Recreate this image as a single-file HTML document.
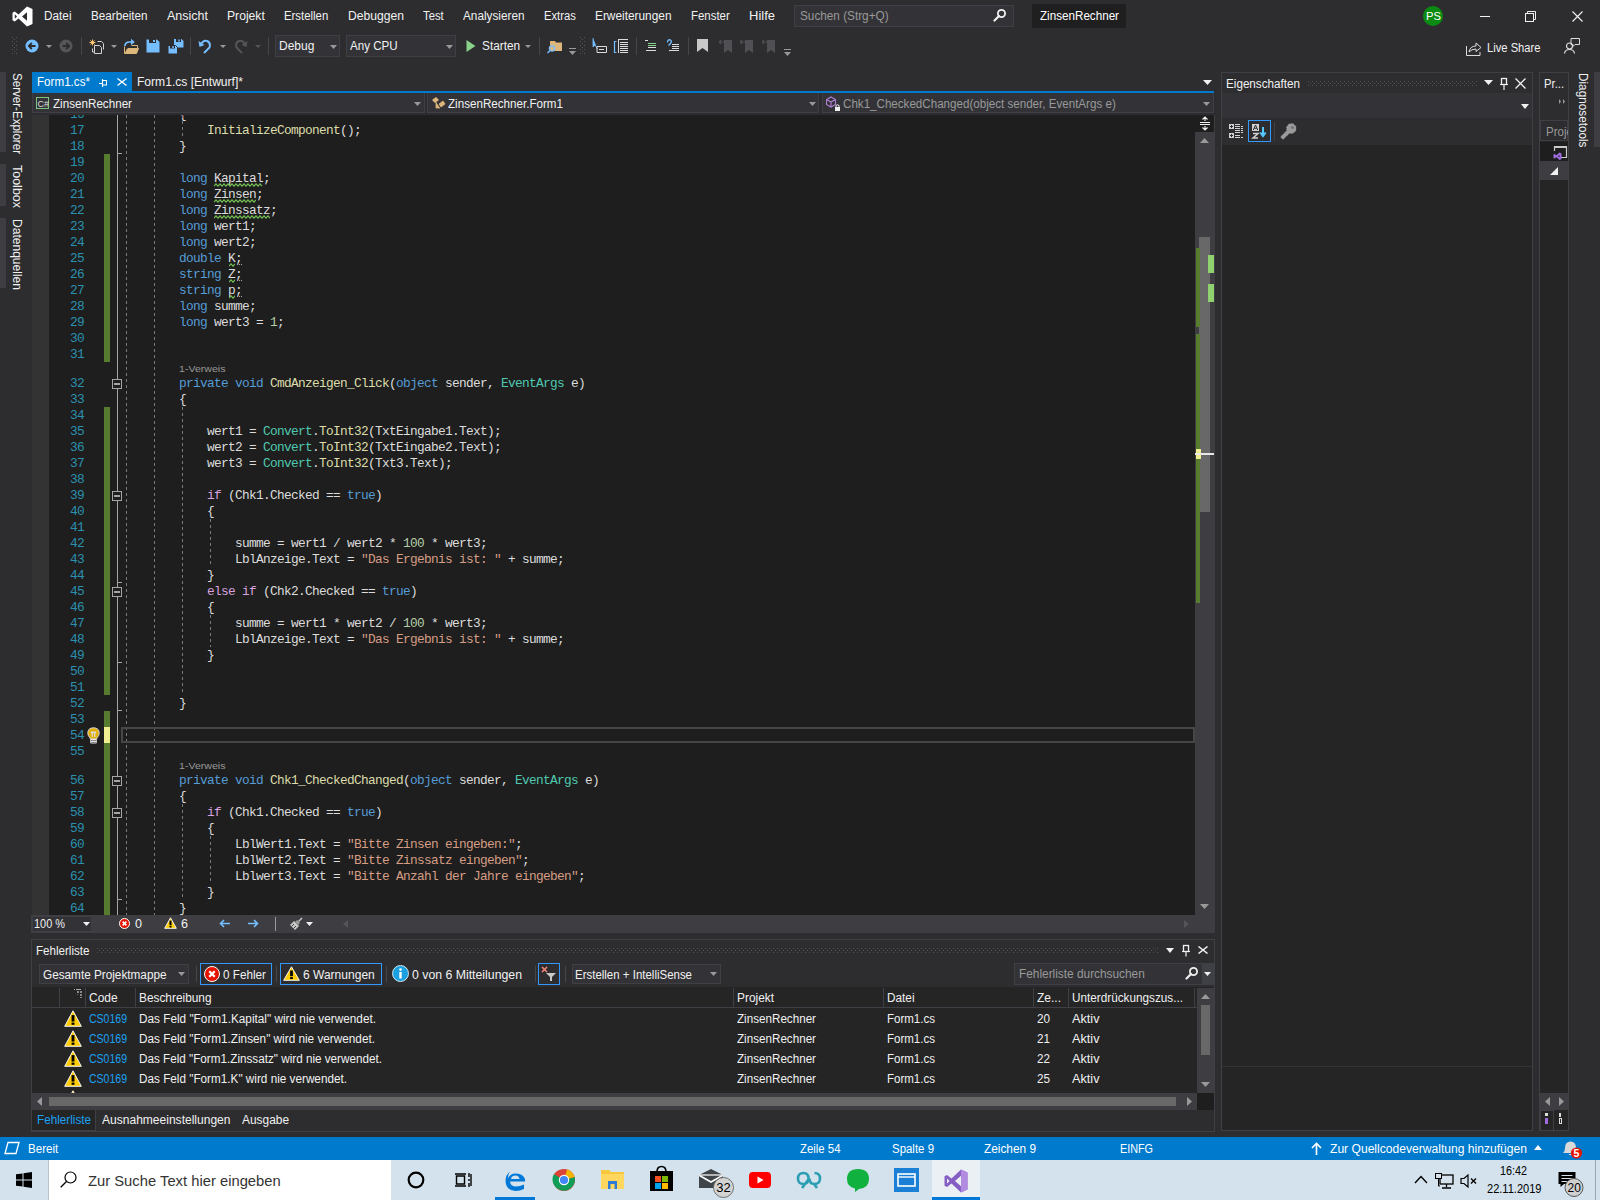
<!DOCTYPE html>
<html><head><meta charset="utf-8"><style>

html,body{margin:0;padding:0;}
body{width:1600px;height:1200px;overflow:hidden;background:#2D2D30;position:relative;font-family:"Liberation Sans",sans-serif;}
.a{position:absolute;box-sizing:border-box;}
.t{position:absolute;white-space:pre;line-height:1;transform-origin:0 0;}
.code{position:absolute;left:123px;white-space:pre;font-family:"Liberation Mono",monospace;font-size:12.8px;letter-spacing:-0.68px;line-height:16px;color:#DCDCDC;}
.ln{position:absolute;left:40px;width:44px;text-align:right;font-family:"Liberation Mono",monospace;font-size:12.8px;letter-spacing:-0.68px;line-height:16px;color:#2B91AF;}
.k{color:#569CD6}.c{color:#D8A0DF}.ty{color:#4EC9B0}.m{color:#DCDCAA}.s{color:#D69D85}.n{color:#B5CEA8}

</style></head><body>
<svg class="a" style="left:12px;top:6px;" width="21" height="21" viewBox="0 0 21 21"><path d="M15 0.5 L20.5 3 V18 L15 20.5 L6.5 12.5 L2.8 15.5 L0.5 14.3 V6.7 L2.8 5.5 L6.5 8.5 Z M15 6.2 L10 10.5 L15 14.8 Z M2.8 8.3 V12.7 L5 10.5 Z" fill="#FFFFFF" fill-rule="evenodd"/></svg>
<div class="t" style="left:43.50px;top:9.84px;font-size:12px;color:#F1F1F1;transform:scaleX(0.9817);">Datei</div>
<div class="t" style="left:90.50px;top:9.84px;font-size:12px;color:#F1F1F1;transform:scaleX(0.9734);">Bearbeiten</div>
<div class="t" style="left:166.50px;top:9.84px;font-size:12px;color:#F1F1F1;transform:scaleX(1.0419);">Ansicht</div>
<div class="t" style="left:226.50px;top:9.84px;font-size:12px;color:#F1F1F1;transform:scaleX(1.0108);">Projekt</div>
<div class="t" style="left:283.50px;top:9.84px;font-size:12px;color:#F1F1F1;transform:scaleX(0.9478);">Erstellen</div>
<div class="t" style="left:347.50px;top:9.84px;font-size:12px;color:#F1F1F1;transform:scaleX(1.0111);">Debuggen</div>
<div class="t" style="left:422.50px;top:9.84px;font-size:12px;color:#F1F1F1;transform:scaleX(0.9428);">Test</div>
<div class="t" style="left:462.50px;top:9.84px;font-size:12px;color:#F1F1F1;transform:scaleX(0.9808);">Analysieren</div>
<div class="t" style="left:543.50px;top:9.84px;font-size:12px;color:#F1F1F1;transform:scaleX(0.9336);">Extras</div>
<div class="t" style="left:594.50px;top:9.84px;font-size:12px;color:#F1F1F1;transform:scaleX(0.9886);">Erweiterungen</div>
<div class="t" style="left:690.50px;top:9.84px;font-size:12px;color:#F1F1F1;transform:scaleX(0.9525);">Fenster</div>
<div class="t" style="left:748.50px;top:9.84px;font-size:12px;color:#F1F1F1;transform:scaleX(1.0831);">Hilfe</div>
<div class="a" style="left:794px;top:5px;width:220px;height:22px;background:#333337;border:1px solid #3F3F46;"></div>
<div class="t" style="left:799.50px;top:9.84px;font-size:12px;color:#999999;transform:scaleX(0.9804);">Suchen (Strg+Q)</div>
<svg class="a" style="left:993px;top:8px;" width="14" height="14" viewBox="0 0 14 14"><circle cx="8.5" cy="5.5" r="3.6" fill="none" stroke="#F1F1F1" stroke-width="1.8"/><path d="M6 8 L1.5 12.5" stroke="#F1F1F1" stroke-width="2.2" stroke-linecap="round"/></svg>
<div class="a" style="left:1032px;top:4px;width:94px;height:24px;background:#1F1F20;"></div>
<div class="t" style="left:1039.50px;top:9.84px;font-size:12px;color:#FFFFFF;transform:scaleX(0.9708);">ZinsenRechner</div>
<svg class="a" style="left:1423px;top:6px;" width="20" height="20" viewBox="0 0 20 20"><circle cx="10" cy="10" r="10" fill="#0B8A12"/></svg>
<div class="t" style="left:1425.50px;top:11.19px;font-size:11px;color:#FFFFFF;transform:scaleX(1.0222);">PS</div>
<div class="a" style="left:1480px;top:16px;width:10px;height:1px;background:#F1F1F1;"></div>
<svg class="a" style="left:1525px;top:11px;" width="12" height="12" viewBox="0 0 12 12"><rect x="0.5" y="2.5" width="8" height="8" fill="none" stroke="#F1F1F1"/><path d="M2.5 2.5 V0.5 H10.5 V8.5 H8.5" fill="none" stroke="#F1F1F1"/></svg>
<svg class="a" style="left:1572px;top:11px;" width="11" height="11" viewBox="0 0 11 11"><path d="M0.5 0.5 L10.5 10.5 M10.5 0.5 L0.5 10.5" stroke="#F1F1F1" stroke-width="1.1"/></svg>
<svg class="a" style="left:12px;top:37px;" width="5" height="18" viewBox="0 0 5 18"><rect x="0" y="0" width="1" height="1" fill="#55555A"/><rect x="4" y="0" width="1" height="1" fill="#55555A"/><rect x="0" y="4" width="1" height="1" fill="#55555A"/><rect x="4" y="4" width="1" height="1" fill="#55555A"/><rect x="0" y="8" width="1" height="1" fill="#55555A"/><rect x="4" y="8" width="1" height="1" fill="#55555A"/><rect x="0" y="12" width="1" height="1" fill="#55555A"/><rect x="4" y="12" width="1" height="1" fill="#55555A"/><rect x="0" y="16" width="1" height="1" fill="#55555A"/><rect x="4" y="16" width="1" height="1" fill="#55555A"/><rect x="2" y="2" width="1" height="1" fill="#55555A"/><rect x="2" y="6" width="1" height="1" fill="#55555A"/><rect x="2" y="10" width="1" height="1" fill="#55555A"/><rect x="2" y="14" width="1" height="1" fill="#55555A"/></svg>
<svg class="a" style="left:25px;top:39px;" width="14" height="14" viewBox="0 0 14 14"><circle cx="7" cy="7" r="6.5" fill="#75BEFF"/><path d="M10.5 7 H4 M6.8 4 L3.8 7 L6.8 10" stroke="#2D2D30" stroke-width="1.8" fill="none"/></svg>
<svg class="a" style="left:46px;top:45px;" width="6" height="3" viewBox="0 0 6 3"><path d="M0 0 H6 L3.0 3 Z" fill="#999999"/></svg>
<svg class="a" style="left:59px;top:39px;" width="14" height="14" viewBox="0 0 14 14"><circle cx="7" cy="7" r="6.5" fill="#555558"/><path d="M3.5 7 H10 M7.2 4 L10.2 7 L7.2 10" stroke="#2D2D30" stroke-width="1.8" fill="none"/></svg>
<div class="a" style="left:81px;top:37px;width:1px;height:18px;background:#46464A;"></div>
<svg class="a" style="left:89px;top:38px;" width="16" height="17" viewBox="0 0 16 17"><path d="M3.5 1.5 V7.5 M0.5 4.5 H6.5 M1.4 2.4 L5.6 6.6 M5.6 2.4 L1.4 6.6" stroke="#F6C26B" stroke-width="1"/><circle cx="3.5" cy="4.5" r="1.6" fill="#F6C26B"/><path d="M8.5 3.5 H12.5 L14.5 5.5 V11.5" fill="none" stroke="#D0D0D0" stroke-width="1"/><path d="M5.5 7.5 H10.5 L12.5 9.5 V15.5 H5.5 Z" fill="#2D2D30" stroke="#D0D0D0" stroke-width="1"/><path d="M3.5 10.5 V14 H5" fill="none" stroke="#D0D0D0" stroke-width="1"/></svg>
<svg class="a" style="left:111px;top:45px;" width="6" height="3" viewBox="0 0 6 3"><path d="M0 0 H6 L3.0 3 Z" fill="#999999"/></svg>
<svg class="a" style="left:123px;top:38px;" width="16" height="17" viewBox="0 0 16 17"><path d="M1.5 8.5 V15.5 H13.5 L15.5 10.5 H5" fill="none" stroke="#DCB67A" stroke-width="1"/><path d="M1.5 15.5 L4 10.5 H15.5 L13.5 15.5 Z" fill="#DCB67A"/><path d="M8.5 7.5 H14.5 V10" fill="none" stroke="#DCB67A" stroke-width="1"/><path d="M2 8 Q2 4 6.5 4 H8.5" fill="none" stroke="#75BEFF" stroke-width="1.7"/><path d="M8 0.8 L11.8 4 L8 7.2 Z" fill="#75BEFF"/></svg>
<svg class="a" style="left:146px;top:39px;" width="14" height="14" viewBox="0 0 14 14"><path d="M0.5 0.5 H11 L13.5 3 V13.5 H0.5 Z" fill="#75BEFF"/><rect x="3" y="0" width="7" height="4" fill="#2D2D30"/><rect x="7" y="1" width="2" height="2" fill="#75BEFF"/></svg>
<svg class="a" style="left:167px;top:38px;" width="17" height="17" viewBox="0 0 17 17"><path d="M7 1 H14.5 L16.5 3 V9.5 H7 Z" fill="#75BEFF"/><rect x="9" y="1" width="5" height="3" fill="#2D2D30"/><rect x="11.3" y="1.5" width="1.5" height="2" fill="#75BEFF"/><path d="M1 7.5 H8.5 L10.5 9.5 V16 H1 Z" fill="#75BEFF" stroke="#2D2D30" stroke-width="1"/><rect x="3" y="7.5" width="5" height="3" fill="#2D2D30"/><rect x="5.3" y="8" width="1.5" height="2" fill="#75BEFF"/></svg>
<div class="a" style="left:190px;top:37px;width:1px;height:18px;background:#46464A;"></div>
<svg class="a" style="left:198px;top:39px;" width="14" height="15" viewBox="0 0 14 15"><path d="M2.5 6 Q5 1 9 2 Q13 3.5 11.5 8.5 L6 14" fill="none" stroke="#75BEFF" stroke-width="2"/><path d="M0.5 2 L1.5 8 L6.5 6 Z" fill="#75BEFF"/></svg>
<svg class="a" style="left:220px;top:45px;" width="6" height="3" viewBox="0 0 6 3"><path d="M0 0 H6 L3.0 3 Z" fill="#999999"/></svg>
<svg class="a" style="left:234px;top:39px;" width="14" height="15" viewBox="0 0 14 15"><path d="M11.5 6 Q9 1 5 2 Q1 3.5 2.5 8.5 L8 14" fill="none" stroke="#555558" stroke-width="2"/><path d="M13.5 2 L12.5 8 L7.5 6 Z" fill="#555558"/></svg>
<svg class="a" style="left:255px;top:45px;" width="6" height="3" viewBox="0 0 6 3"><path d="M0 0 H6 L3.0 3 Z" fill="#555558"/></svg>
<div class="a" style="left:268px;top:37px;width:1px;height:18px;background:#46464A;"></div>
<div class="a" style="left:275px;top:35px;width:65px;height:22px;background:#333337;border:1px solid #3F3F46;"></div>
<div class="t" style="left:278.90px;top:40.34px;font-size:12px;color:#F1F1F1;transform:scaleX(0.9983);">Debug</div>
<svg class="a" style="left:330px;top:45px;" width="7" height="4" viewBox="0 0 7 4"><path d="M0 0 H7 L3.5 4 Z" fill="#999999"/></svg>
<div class="a" style="left:346px;top:35px;width:110px;height:22px;background:#333337;border:1px solid #3F3F46;"></div>
<div class="t" style="left:349.50px;top:40.34px;font-size:12px;color:#F1F1F1;transform:scaleX(0.9666);">Any CPU</div>
<svg class="a" style="left:446px;top:45px;" width="7" height="4" viewBox="0 0 7 4"><path d="M0 0 H7 L3.5 4 Z" fill="#999999"/></svg>
<svg class="a" style="left:466px;top:40px;" width="10" height="12" viewBox="0 0 10 12"><path d="M0.5 0 L9.5 6 L0.5 12 Z" fill="#8AD28A"/></svg>
<div class="t" style="left:482.30px;top:40.34px;font-size:12px;color:#F1F1F1;transform:scaleX(0.9873);">Starten</div>
<svg class="a" style="left:525px;top:45px;" width="6" height="3" viewBox="0 0 6 3"><path d="M0 0 H6 L3.0 3 Z" fill="#999999"/></svg>
<div class="a" style="left:539px;top:37px;width:1px;height:18px;background:#46464A;"></div>
<svg class="a" style="left:547px;top:38px;" width="16" height="16" viewBox="0 0 16 16"><path d="M3 3 H8 L9 4.5 H15 V13 H3 Z" fill="#DCB67A"/><circle cx="5" cy="10.5" r="2.6" fill="none" stroke="#75BEFF" stroke-width="1.3"/><path d="M3 12.5 L0.5 15" stroke="#75BEFF" stroke-width="1.5"/></svg>
<svg class="a" style="left:569px;top:48px;" width="7" height="7" viewBox="0 0 7 7"><rect x="0" y="0" width="7" height="1" fill="#999"/><path d="M0 3 H7 L3.5 7 Z" fill="#999"/></svg>
<svg class="a" style="left:580px;top:37px;" width="5" height="18" viewBox="0 0 5 18"><rect x="0" y="0" width="1" height="1" fill="#55555A"/><rect x="4" y="0" width="1" height="1" fill="#55555A"/><rect x="0" y="4" width="1" height="1" fill="#55555A"/><rect x="4" y="4" width="1" height="1" fill="#55555A"/><rect x="0" y="8" width="1" height="1" fill="#55555A"/><rect x="4" y="8" width="1" height="1" fill="#55555A"/><rect x="0" y="12" width="1" height="1" fill="#55555A"/><rect x="4" y="12" width="1" height="1" fill="#55555A"/><rect x="0" y="16" width="1" height="1" fill="#55555A"/><rect x="4" y="16" width="1" height="1" fill="#55555A"/><rect x="2" y="2" width="1" height="1" fill="#55555A"/><rect x="2" y="6" width="1" height="1" fill="#55555A"/><rect x="2" y="10" width="1" height="1" fill="#55555A"/><rect x="2" y="14" width="1" height="1" fill="#55555A"/></svg>
<svg class="a" style="left:592px;top:38px;" width="15" height="16" viewBox="0 0 15 16"><path d="M1 0 V9 L3 7 L5.5 11" fill="#75BEFF" stroke="#75BEFF" stroke-width="0.8"/><path d="M5 8.5 V14.5 H14.5 V8.5 Z" fill="none" stroke="#DCDCDC" stroke-width="1"/><path d="M7 11.5 H12" stroke="#DCDCDC"/></svg>
<svg class="a" style="left:613px;top:38px;" width="16" height="16" viewBox="0 0 16 16"><path d="M3.5 3.5 H1.5 V14.5 H3.5" fill="none" stroke="#75BEFF" stroke-width="1.2"/><path d="M5 1.5 H15 M7 4.5 H15 M7 6.5 H15 M7 8.5 H15 M7 10.5 H15 M7 12.5 H15 M7 14.5 H15" stroke="#DCDCDC" stroke-width="1"/><path d="M5.5 1 V15" stroke="#DCDCDC" stroke-width="1"/></svg>
<div class="a" style="left:636px;top:37px;width:1px;height:18px;background:#46464A;"></div>
<svg class="a" style="left:645px;top:39px;" width="12" height="13" viewBox="0 0 12 13"><path d="M0 1.5 H3 M3 4.5 H11 M3 6.5 H11 M3 8.5 H11 M1 11.5 H11" stroke="#DCDCDC" stroke-width="1"/><path d="M3 4.5 H11 M3 6.5 H11" stroke="#8AD28A" stroke-width="1"/></svg>
<svg class="a" style="left:666px;top:39px;" width="14" height="14" viewBox="0 0 14 14"><path d="M1.5 3.5 Q1.5 0.5 4 0.8 Q6.5 1.5 4.5 4.5 L2.5 6.5" fill="none" stroke="#75BEFF" stroke-width="1.3"/><path d="M6 5.5 H13 M6 7.5 H13 M6 9.5 H13 M3 11.5 H13" stroke="#DCDCDC" stroke-width="1"/></svg>
<div class="a" style="left:688px;top:37px;width:1px;height:18px;background:#46464A;"></div>
<svg class="a" style="left:697px;top:39px;" width="11" height="13" viewBox="0 0 11 13"><path d="M0 0 H11 V13 L5.5 9 L0 13 Z" fill="#C8C8C8"/></svg>
<svg class="a" style="left:719px;top:39px;" width="14" height="14" viewBox="0 0 14 14"><path d="M5 1 H13 V14 L9 11 L5 14 Z" fill="#505054"/><path d="M0 3 H5 M2 1 L0 3 L2 5" stroke="#505054" stroke-width="1.2" fill="none"/></svg>
<svg class="a" style="left:740px;top:39px;" width="14" height="14" viewBox="0 0 14 14"><path d="M5 1 H13 V14 L9 11 L5 14 Z" fill="#505054"/><path d="M0 3 H5 M2 1 L0 3 L2 5" stroke="#505054" stroke-width="1.2" fill="none"/></svg>
<svg class="a" style="left:762px;top:39px;" width="14" height="14" viewBox="0 0 14 14"><path d="M5 1 H13 V14 L9 11 L5 14 Z" fill="#505054"/><path d="M0 3 H5 M2 1 L0 3 L2 5" stroke="#505054" stroke-width="1.2" fill="none"/></svg>
<svg class="a" style="left:784px;top:49px;" width="7" height="7" viewBox="0 0 7 7"><rect x="0" y="0" width="7" height="1" fill="#999"/><path d="M0 3 H7 L3.5 7 Z" fill="#999"/></svg>
<svg class="a" style="left:1466px;top:41px;" width="16" height="15" viewBox="0 0 16 15"><path d="M0.5 5 V14.5 H14 V11" fill="none" stroke="#DCDCDC" stroke-width="1"/><path d="M3 11 Q4 5 10 5 V2 L15 6.5 L10 10.5 V8 Q5.5 8 3 11 Z" fill="none" stroke="#DCDCDC" stroke-width="1"/></svg>
<div class="t" style="left:1487.00px;top:42.34px;font-size:12px;color:#F1F1F1;transform:scaleX(0.9326);">Live Share</div>
<svg class="a" style="left:1564px;top:38px;" width="16" height="16" viewBox="0 0 16 16"><circle cx="5.5" cy="8" r="3" fill="none" stroke="#DCDCDC" stroke-width="1.2"/><path d="M0.5 15.5 Q1 11.5 5.5 11.5 Q10 11.5 10.5 15.5" fill="none" stroke="#DCDCDC" stroke-width="1.2"/><path d="M7 0.5 H15.5 V6.5 H11 L9 8.5 V6.5 H7 Z" fill="none" stroke="#DCDCDC" stroke-width="1"/></svg>
<div class="a" style="left:0px;top:72px;width:6px;height:80px;background:#3E3E42;"></div>
<div class="t" style="left:22.50px;top:73.00px;font-size:12px;color:#F1F1F1;transform:rotate(90deg) scaleX(0.9640);">Server-Explorer</div>
<div class="a" style="left:0px;top:164px;width:6px;height:42px;background:#3E3E42;"></div>
<div class="t" style="left:22.50px;top:165.00px;font-size:12px;color:#F1F1F1;transform:rotate(90deg) scaleX(1.0396);">Toolbox</div>
<div class="a" style="left:0px;top:218px;width:6px;height:70px;background:#3E3E42;"></div>
<div class="t" style="left:22.50px;top:219.00px;font-size:12px;color:#F1F1F1;transform:rotate(90deg) scaleX(1.0039);">Datenquellen</div>
<div class="a" style="left:32px;top:72px;width:100px;height:19px;background:#007ACC;"></div>
<div class="t" style="left:36.50px;top:75.84px;font-size:12px;color:#FFFFFF;transform:scaleX(0.9694);">Form1.cs*</div>
<svg class="a" style="left:98px;top:78px;" width="10" height="9" viewBox="0 0 10 9"><path d="M1 5.5 H4.5 M4.5 1 V9" stroke="#FFFFFF" stroke-width="1.1"/><rect x="4.5" y="2.5" width="4" height="4.5" fill="none" stroke="#FFFFFF" stroke-width="1"/></svg>
<svg class="a" style="left:117px;top:78px;" width="10" height="8" viewBox="0 0 10 8"><path d="M0.5 0.5 L9.5 7.5 M9.5 0.5 L0.5 7.5" stroke="#FFFFFF" stroke-width="1.3"/></svg>
<div class="t" style="left:136.50px;top:75.84px;font-size:12px;color:#F1F1F1;transform:scaleX(1.0061);">Form1.cs [Entwurf]*</div>
<svg class="a" style="left:1203px;top:80px;" width="9" height="6" viewBox="0 0 9 6"><path d="M0 0 H9 L4.5 5 Z" fill="#F1F1F1"/></svg>
<div class="a" style="left:32px;top:91px;width:1182px;height:2px;background:#007ACC;"></div>
<div class="a" style="left:32px;top:93px;width:1182px;height:22px;background:#2D2D30;"></div>
<div class="a" style="left:32px;top:93px;width:393px;height:20px;background:#333337;border:1px solid #3F3F46;border-top:none;"></div>
<div class="a" style="left:427px;top:93px;width:392px;height:20px;background:#333337;border:1px solid #3F3F46;border-top:none;"></div>
<div class="a" style="left:822px;top:93px;width:392px;height:20px;background:#333337;border:1px solid #3F3F46;border-top:none;"></div>
<svg class="a" style="left:36px;top:97px;" width="13" height="12" viewBox="0 0 13 12"><rect x="0.5" y="0.5" width="12" height="11" fill="none" stroke="#7CC47F"/><text x="1.5" y="9.5" font-family="Liberation Sans" font-size="9" fill="#DCDCDC">C#</text></svg>
<div class="t" style="left:52.50px;top:97.84px;font-size:12px;color:#F1F1F1;transform:scaleX(0.9708);">ZinsenRechner</div>
<svg class="a" style="left:414px;top:102px;" width="7" height="4" viewBox="0 0 7 4"><path d="M0 0 H7 L3.5 4 Z" fill="#999999"/></svg>
<svg class="a" style="left:431px;top:96px;" width="15" height="14" viewBox="0 0 15 14"><path d="M1 4 L5 1 L8 4 L4 7 Z" fill="#DCB67A"/><path d="M5 6 V12 H9 M8 8 L12 5 L14 8 L10 11 Z" fill="#DCB67A" stroke="#DCB67A" stroke-width="0.8"/></svg>
<div class="t" style="left:447.50px;top:97.84px;font-size:12px;color:#F1F1F1;transform:scaleX(0.9687);">ZinsenRechner.Form1</div>
<svg class="a" style="left:809px;top:102px;" width="7" height="4" viewBox="0 0 7 4"><path d="M0 0 H7 L3.5 4 Z" fill="#999999"/></svg>
<svg class="a" style="left:826px;top:96px;" width="15" height="16" viewBox="0 0 15 16"><path d="M5 1 L9.5 3.5 V8.5 L5 11 L0.5 8.5 V3.5 Z M0.5 3.5 L5 6 L9.5 3.5 M5 6 V11" fill="none" stroke="#B180D7" stroke-width="1.1"/><rect x="9" y="11" width="5" height="4" fill="#F1F1F1"/><path d="M10 11 V9.5 Q11.5 8 13 9.5 V11" fill="none" stroke="#F1F1F1"/></svg>
<div class="t" style="left:843.25px;top:97.84px;font-size:12px;color:#999999;transform:scaleX(0.9666);">Chk1_CheckedChanged(object sender, EventArgs e)</div>
<svg class="a" style="left:1203px;top:102px;" width="7" height="4" viewBox="0 0 7 4"><path d="M0 0 H7 L3.5 4 Z" fill="#999999"/></svg>
<div class="a" style="left:32px;top:115px;width:17px;height:800px;background:#333333;"></div>
<div class="a" style="left:0;top:115px;width:1195px;height:800px;overflow:hidden;">
<div class="a" style="left:49px;top:0px;width:1146px;height:800px;background:#1E1E1E;"></div>
<div class="ln" style="top:-8.5px">16</div>
<div class="code" style="top:-8.5px">        {</div>
<div class="ln" style="top:7.5px">17</div>
<div class="code" style="top:7.5px">            <span class="m">InitializeComponent</span>();</div>
<div class="ln" style="top:23.5px">18</div>
<div class="code" style="top:23.5px">        }</div>
<div class="ln" style="top:39.5px">19</div>
<div class="ln" style="top:55.5px">20</div>
<div class="code" style="top:55.5px">        <span class="k">long</span> Kapital;</div>
<div class="ln" style="top:71.5px">21</div>
<div class="code" style="top:71.5px">        <span class="k">long</span> Zinsen;</div>
<div class="ln" style="top:87.5px">22</div>
<div class="code" style="top:87.5px">        <span class="k">long</span> Zinssatz;</div>
<div class="ln" style="top:103.5px">23</div>
<div class="code" style="top:103.5px">        <span class="k">long</span> wert1;</div>
<div class="ln" style="top:119.5px">24</div>
<div class="code" style="top:119.5px">        <span class="k">long</span> wert2;</div>
<div class="ln" style="top:135.5px">25</div>
<div class="code" style="top:135.5px">        <span class="k">double</span> K;</div>
<div class="ln" style="top:151.5px">26</div>
<div class="code" style="top:151.5px">        <span class="k">string</span> Z;</div>
<div class="ln" style="top:167.5px">27</div>
<div class="code" style="top:167.5px">        <span class="k">string</span> p;</div>
<div class="ln" style="top:183.5px">28</div>
<div class="code" style="top:183.5px">        <span class="k">long</span> summe;</div>
<div class="ln" style="top:199.5px">29</div>
<div class="code" style="top:199.5px">        <span class="k">long</span> wert3 = <span class="n">1</span>;</div>
<div class="ln" style="top:215.5px">30</div>
<div class="ln" style="top:231.5px">31</div>
<div class="ln" style="top:260.5px">32</div>
<div class="code" style="top:260.5px">        <span class="k">private</span> <span class="k">void</span> <span class="m">CmdAnzeigen_Click</span>(<span class="k">object</span> sender, <span class="ty">EventArgs</span> e)</div>
<div class="ln" style="top:276.5px">33</div>
<div class="code" style="top:276.5px">        {</div>
<div class="ln" style="top:292.5px">34</div>
<div class="ln" style="top:308.5px">35</div>
<div class="code" style="top:308.5px">            wert1 = <span class="ty">Convert</span>.<span class="m">ToInt32</span>(TxtEingabe1.Text);</div>
<div class="ln" style="top:324.5px">36</div>
<div class="code" style="top:324.5px">            wert2 = <span class="ty">Convert</span>.<span class="m">ToInt32</span>(TxtEingabe2.Text);</div>
<div class="ln" style="top:340.5px">37</div>
<div class="code" style="top:340.5px">            wert3 = <span class="ty">Convert</span>.<span class="m">ToInt32</span>(Txt3.Text);</div>
<div class="ln" style="top:356.5px">38</div>
<div class="ln" style="top:372.5px">39</div>
<div class="code" style="top:372.5px">            <span class="c">if</span> (Chk1.Checked == <span class="k">true</span>)</div>
<div class="ln" style="top:388.5px">40</div>
<div class="code" style="top:388.5px">            {</div>
<div class="ln" style="top:404.5px">41</div>
<div class="ln" style="top:420.5px">42</div>
<div class="code" style="top:420.5px">                summe = wert1 / wert2 * <span class="n">100</span> * wert3;</div>
<div class="ln" style="top:436.5px">43</div>
<div class="code" style="top:436.5px">                LblAnzeige.Text = <span class="s">&quot;Das Ergebnis ist: &quot;</span> + summe;</div>
<div class="ln" style="top:452.5px">44</div>
<div class="code" style="top:452.5px">            }</div>
<div class="ln" style="top:468.5px">45</div>
<div class="code" style="top:468.5px">            <span class="c">else</span> <span class="c">if</span> (Chk2.Checked == <span class="k">true</span>)</div>
<div class="ln" style="top:484.5px">46</div>
<div class="code" style="top:484.5px">            {</div>
<div class="ln" style="top:500.5px">47</div>
<div class="code" style="top:500.5px">                summe = wert1 * wert2 / <span class="n">100</span> * wert3;</div>
<div class="ln" style="top:516.5px">48</div>
<div class="code" style="top:516.5px">                LblAnzeige.Text = <span class="s">&quot;Das Ergebnis ist: &quot;</span> + summe;</div>
<div class="ln" style="top:532.5px">49</div>
<div class="code" style="top:532.5px">            }</div>
<div class="ln" style="top:548.5px">50</div>
<div class="ln" style="top:564.5px">51</div>
<div class="ln" style="top:580.5px">52</div>
<div class="code" style="top:580.5px">        }</div>
<div class="ln" style="top:596.5px">53</div>
<div class="ln" style="top:612.5px">54</div>
<div class="ln" style="top:628.5px">55</div>
<div class="ln" style="top:657.5px">56</div>
<div class="code" style="top:657.5px">        <span class="k">private</span> <span class="k">void</span> <span class="m">Chk1_CheckedChanged</span>(<span class="k">object</span> sender, <span class="ty">EventArgs</span> e)</div>
<div class="ln" style="top:673.5px">57</div>
<div class="code" style="top:673.5px">        {</div>
<div class="ln" style="top:689.5px">58</div>
<div class="code" style="top:689.5px">            <span class="c">if</span> (Chk1.Checked == <span class="k">true</span>)</div>
<div class="ln" style="top:705.5px">59</div>
<div class="code" style="top:705.5px">            {</div>
<div class="ln" style="top:721.5px">60</div>
<div class="code" style="top:721.5px">                LblWert1.Text = <span class="s">&quot;Bitte Zinsen eingeben:&quot;</span>;</div>
<div class="ln" style="top:737.5px">61</div>
<div class="code" style="top:737.5px">                LblWert2.Text = <span class="s">&quot;Bitte Zinssatz eingeben&quot;</span>;</div>
<div class="ln" style="top:753.5px">62</div>
<div class="code" style="top:753.5px">                Lblwert3.Text = <span class="s">&quot;Bitte Anzahl der Jahre eingeben&quot;</span>;</div>
<div class="ln" style="top:769.5px">63</div>
<div class="code" style="top:769.5px">            }</div>
<div class="ln" style="top:785.5px">64</div>
<div class="code" style="top:785.5px">        }</div>
<div class="t" style="left:179.00px;top:250.14px;font-size:8.7px;color:#999999;transform:scaleX(1.2191);">1-Verweis</div>
<div class="t" style="left:179.00px;top:647.14px;font-size:8.7px;color:#999999;transform:scaleX(1.2191);">1-Verweis</div>
<div class="a" style="left:104px;top:39px;width:6px;height:208px;background:#587C2F;"></div>
<div class="a" style="left:104px;top:292px;width:6px;height:288px;background:#587C2F;"></div>
<div class="a" style="left:104px;top:596px;width:6px;height:205px;background:#587C2F;"></div>
<div class="a" style="left:104px;top:612px;width:6px;height:16px;background:#EFEF91;"></div>
<svg class="a" style="left:87px;top:612px;" width="13" height="17" viewBox="0 0 13 17"><path d="M6.5 0.8 Q12.2 0.8 12.2 6.3 Q12.2 8.8 9.8 11 V12 H3.2 V11 Q0.8 8.8 0.8 6.3 Q0.8 0.8 6.5 0.8 Z" fill="#E3B000" stroke="#D8D8DC" stroke-width="1"/><rect x="3.8" y="4.5" width="5.4" height="1.6" fill="#DCDCE6"/><rect x="4.6" y="5.5" width="1.2" height="4.5" fill="#DCDCE6"/><rect x="7.2" y="5.5" width="1.2" height="4.5" fill="#DCDCE6"/><rect x="3.2" y="12" width="6.6" height="4.5" rx="1" fill="#E6E6EA"/><rect x="4" y="13" width="5" height="1" fill="#8A8A8A"/><rect x="4" y="15" width="5" height="1" fill="#8A8A8A"/></svg>
<div class="a" style="left:117px;top:0px;width:1px;height:800px;background:#A5A5A5;"></div>
<div class="a" style="left:112px;top:264px;width:10px;height:10px;background:#1E1E1E;border:1px solid #A5A5A5;"></div>
<div class="a" style="left:114px;top:268px;width:6px;height:2px;background:#A5A5A5;"></div>
<div class="a" style="left:112px;top:376px;width:10px;height:10px;background:#1E1E1E;border:1px solid #A5A5A5;"></div>
<div class="a" style="left:114px;top:380px;width:6px;height:2px;background:#A5A5A5;"></div>
<div class="a" style="left:112px;top:472px;width:10px;height:10px;background:#1E1E1E;border:1px solid #A5A5A5;"></div>
<div class="a" style="left:114px;top:476px;width:6px;height:2px;background:#A5A5A5;"></div>
<div class="a" style="left:112px;top:661px;width:10px;height:10px;background:#1E1E1E;border:1px solid #A5A5A5;"></div>
<div class="a" style="left:114px;top:665px;width:6px;height:2px;background:#A5A5A5;"></div>
<div class="a" style="left:112px;top:693px;width:10px;height:10px;background:#1E1E1E;border:1px solid #A5A5A5;"></div>
<div class="a" style="left:114px;top:697px;width:6px;height:2px;background:#A5A5A5;"></div>
<div class="a" style="left:117px;top:38px;width:5px;height:1px;background:#A5A5A5;"></div>
<div class="a" style="left:117px;top:467px;width:5px;height:1px;background:#A5A5A5;"></div>
<div class="a" style="left:117px;top:547px;width:5px;height:1px;background:#A5A5A5;"></div>
<div class="a" style="left:117px;top:595px;width:5px;height:1px;background:#A5A5A5;"></div>
<div class="a" style="left:117px;top:784px;width:5px;height:1px;background:#A5A5A5;"></div>
<div class="a" style="left:126px;top:0px;width:1px;height:800px;background:repeating-linear-gradient(to bottom,#7A7A7A 0 3px,transparent 3px 6px);"></div>
<div class="a" style="left:154px;top:0px;width:1px;height:800px;background:repeating-linear-gradient(to bottom,#7A7A7A 0 3px,transparent 3px 6px);"></div>
<div class="a" style="left:182px;top:0px;width:1px;height:23px;background:repeating-linear-gradient(to bottom,#7A7A7A 0 3px,transparent 3px 6px);"></div>
<div class="a" style="left:182px;top:292px;width:1px;height:288px;background:repeating-linear-gradient(to bottom,#7A7A7A 0 3px,transparent 3px 6px);"></div>
<div class="a" style="left:182px;top:689px;width:1px;height:96px;background:repeating-linear-gradient(to bottom,#7A7A7A 0 3px,transparent 3px 6px);"></div>
<div class="a" style="left:210px;top:404px;width:1px;height:48px;background:repeating-linear-gradient(to bottom,#7A7A7A 0 3px,transparent 3px 6px);"></div>
<div class="a" style="left:210px;top:500px;width:1px;height:32px;background:repeating-linear-gradient(to bottom,#7A7A7A 0 3px,transparent 3px 6px);"></div>
<div class="a" style="left:210px;top:721px;width:1px;height:48px;background:repeating-linear-gradient(to bottom,#7A7A7A 0 3px,transparent 3px 6px);"></div>
<div class="a" style="left:121px;top:612px;width:1074px;height:16px;border:2px solid #464646;"></div>
<svg class="a" style="left:214px;top:68px;" width="49" height="4" viewBox="0 0 49 4"><polyline points="0,3.2 2,0.8 4,3.2 6,0.8 8,3.2 10,0.8 12,3.2 14,0.8 16,3.2 18,0.8 20,3.2 22,0.8 24,3.2 26,0.8 28,3.2 30,0.8 32,3.2 34,0.8 36,3.2 38,0.8 40,3.2 42,0.8 44,3.2 46,0.8 48,3.2" fill="none" stroke="#74C052" stroke-width="1.1"/></svg>
<svg class="a" style="left:214px;top:84px;" width="42" height="4" viewBox="0 0 42 4"><polyline points="0,3.2 2,0.8 4,3.2 6,0.8 8,3.2 10,0.8 12,3.2 14,0.8 16,3.2 18,0.8 20,3.2 22,0.8 24,3.2 26,0.8 28,3.2 30,0.8 32,3.2 34,0.8 36,3.2 38,0.8 40,3.2 42,0.8" fill="none" stroke="#74C052" stroke-width="1.1"/></svg>
<svg class="a" style="left:214px;top:100px;" width="56" height="4" viewBox="0 0 56 4"><polyline points="0,3.2 2,0.8 4,3.2 6,0.8 8,3.2 10,0.8 12,3.2 14,0.8 16,3.2 18,0.8 20,3.2 22,0.8 24,3.2 26,0.8 28,3.2 30,0.8 32,3.2 34,0.8 36,3.2 38,0.8 40,3.2 42,0.8 44,3.2 46,0.8 48,3.2 50,0.8 52,3.2 54,0.8 56,3.2" fill="none" stroke="#74C052" stroke-width="1.1"/></svg>
<svg class="a" style="left:229px;top:148px;" width="6" height="4" viewBox="0 0 6 4"><polyline points="0,3.2 2,0.8 4,3.2 6,0.8" fill="none" stroke="#74C052" stroke-width="1.1"/></svg>
<div class="a" style="left:237px;top:149px;width:1px;height:1px;background:#AAAAAA;"></div>
<div class="a" style="left:239px;top:149px;width:1px;height:1px;background:#AAAAAA;"></div>
<div class="a" style="left:241px;top:149px;width:1px;height:1px;background:#AAAAAA;"></div>
<svg class="a" style="left:229px;top:164px;" width="6" height="4" viewBox="0 0 6 4"><polyline points="0,3.2 2,0.8 4,3.2 6,0.8" fill="none" stroke="#74C052" stroke-width="1.1"/></svg>
<div class="a" style="left:237px;top:165px;width:1px;height:1px;background:#AAAAAA;"></div>
<div class="a" style="left:239px;top:165px;width:1px;height:1px;background:#AAAAAA;"></div>
<div class="a" style="left:241px;top:165px;width:1px;height:1px;background:#AAAAAA;"></div>
<svg class="a" style="left:229px;top:180px;" width="6" height="4" viewBox="0 0 6 4"><polyline points="0,3.2 2,0.8 4,3.2 6,0.8" fill="none" stroke="#74C052" stroke-width="1.1"/></svg>
<div class="a" style="left:237px;top:181px;width:1px;height:1px;background:#AAAAAA;"></div>
<div class="a" style="left:239px;top:181px;width:1px;height:1px;background:#AAAAAA;"></div>
<div class="a" style="left:241px;top:181px;width:1px;height:1px;background:#AAAAAA;"></div>
</div>
<div class="a" style="left:1195px;top:115px;width:20px;height:800px;background:#3E3E42;"></div>
<div class="a" style="left:1195px;top:115px;width:19px;height:17px;background:#1E1E1E;"></div>
<svg class="a" style="left:1199px;top:116px;" width="12" height="15" viewBox="0 0 12 15"><path d="M1 6.5 H11 M1 8.5 H11 M6 1 V5 M6 10 V14 M3.5 3.5 L6 1 L8.5 3.5 M3.5 11.5 L6 14 L8.5 11.5" fill="none" stroke="#F1F1F1" stroke-width="1.1"/></svg>
<svg class="a" style="left:1200px;top:138px;" width="9" height="5" viewBox="0 0 9 5"><path d="M0 5 L4.5 0 L9 5 Z" fill="#999999"/></svg>
<svg class="a" style="left:1200px;top:904px;" width="9" height="5" viewBox="0 0 9 5"><path d="M0 0 L4.5 5 L9 0 Z" fill="#999999"/></svg>
<div class="a" style="left:1199px;top:237px;width:11px;height:275px;background:#686868;"></div>
<div class="a" style="left:1196px;top:248px;width:4px;height:79px;background:#587C2F;"></div>
<div class="a" style="left:1196px;top:334px;width:4px;height:269px;background:#587C2F;"></div>
<div class="a" style="left:1208px;top:255px;width:6px;height:18px;background:#8FD16F;"></div>
<div class="a" style="left:1208px;top:284px;width:6px;height:18px;background:#8FD16F;"></div>
<div class="a" style="left:1196px;top:449px;width:5px;height:10px;background:#EFEF91;"></div>
<div class="a" style="left:1195px;top:453px;width:19px;height:2px;background:#E8E8E8;"></div>
<div class="a" style="left:31px;top:915px;width:1184px;height:18px;background:#3E3E42;"></div>
<div class="a" style="left:32px;top:916px;width:60px;height:16px;background:#333337;border:1px solid #3F3F46;"></div>
<div class="t" style="left:33.50px;top:917.84px;font-size:12px;color:#F1F1F1;transform:scaleX(0.9111);">100 %</div>
<svg class="a" style="left:83px;top:922px;" width="7" height="4" viewBox="0 0 7 4"><path d="M0 0 H7 L3.5 4 Z" fill="#F1F1F1"/></svg>
<svg class="a" style="left:119px;top:918px;" width="11" height="11" viewBox="0 0 11 11"><circle cx="5.5" cy="5.5" r="5.0" fill="#E51400" stroke="#FFFFFF" stroke-width="1"/><path d="M3.6300000000000003 3.6300000000000003 L7.37 7.37 M7.37 3.6300000000000003 L3.6300000000000003 7.37" stroke="#FFFFFF" stroke-width="1.54"/></svg>
<div class="t" style="left:134.50px;top:917.84px;font-size:12px;color:#F1F1F1;transform:scaleX(1.0489);">0</div>
<svg class="a" style="left:164px;top:917px;" width="13" height="12" viewBox="0 0 13 12"><path d="M6.5 0.8 L12.3 11.3 H0.7 Z" fill="#FFCC00" stroke="#F4F4F4" stroke-width="1.0" stroke-linejoin="round"/><rect x="5.46" y="3.5999999999999996" width="2.08" height="4.5600000000000005" fill="#000"/><rect x="5.46" y="8.879999999999999" width="2.08" height="1.56" fill="#000"/></svg>
<div class="t" style="left:180.50px;top:917.84px;font-size:12px;color:#F1F1F1;transform:scaleX(1.0489);">6</div>
<svg class="a" style="left:219px;top:919px;" width="12" height="9" viewBox="0 0 12 9"><path d="M11 4.5 H2 M5 1 L1.5 4.5 L5 8" fill="none" stroke="#75BEFF" stroke-width="1.6"/></svg>
<svg class="a" style="left:247px;top:919px;" width="12" height="9" viewBox="0 0 12 9"><path d="M1 4.5 H10 M7 1 L10.5 4.5 L7 8" fill="none" stroke="#75BEFF" stroke-width="1.6"/></svg>
<div class="a" style="left:275px;top:917px;width:1px;height:14px;background:#999999;"></div>
<svg class="a" style="left:289px;top:916px;" width="14" height="15" viewBox="0 0 14 15"><path d="M1 9 L6 14 L10 10 L5 5 Z" fill="#C8C8C8"/><path d="M2.5 10.5 L5 8 M4.5 12.5 L7 10" stroke="#3E3E42" stroke-width="1"/><path d="M6 6 L8 4 L11 7 L9 9 Z" fill="#9A9A9A"/><path d="M9.5 5.5 L13 2" stroke="#C8C8C8" stroke-width="1.4"/></svg>
<svg class="a" style="left:306px;top:922px;" width="7" height="4" viewBox="0 0 7 4"><path d="M0 0 H7 L3.5 4 Z" fill="#F1F1F1"/></svg>
<svg class="a" style="left:343px;top:920px;" width="5" height="8" viewBox="0 0 5 8"><path d="M5 0 V8 L0 4 Z" fill="#555558"/></svg>
<svg class="a" style="left:1184px;top:920px;" width="5" height="8" viewBox="0 0 5 8"><path d="M0 0 V8 L5 4 Z" fill="#555558"/></svg>
<div class="a" style="left:31px;top:939px;width:1184px;height:193px;background:#252526;border:1px solid #3F3F46;"></div>
<div class="a" style="left:32px;top:940px;width:1182px;height:22px;background:#2D2D30;"></div>
<div class="t" style="left:36.00px;top:944.84px;font-size:12px;color:#F1F1F1;transform:scaleX(0.9665);">Fehlerliste</div>
<svg class="a" style="left:97px;top:948px" width="1061" height="5"><defs><pattern id="gp1" width="4" height="4" patternUnits="userSpaceOnUse"><rect x="0" y="0" width="1" height="1" fill="#505055"/><rect x="2" y="2" width="1" height="1" fill="#505055"/></pattern></defs><rect width="1061" height="5" fill="url(#gp1)"/></svg>
<svg class="a" style="left:1166px;top:948px;" width="8" height="5" viewBox="0 0 8 5"><path d="M0 0 H8 L4 5 Z" fill="#F1F1F1"/></svg>
<svg class="a" style="left:1182px;top:944px;" width="9" height="13" viewBox="0 0 9 13"><rect x="1.5" y="1.5" width="5" height="6" fill="none" stroke="#F1F1F1" stroke-width="1.3"/><path d="M0 7.5 H8 M4 7.5 V12.5" stroke="#F1F1F1" stroke-width="1.2"/></svg>
<svg class="a" style="left:1198px;top:946px;" width="10" height="8" viewBox="0 0 10 8"><path d="M0.5 0.5 L9.5 7.5 M9.5 0.5 L0.5 7.5" stroke="#F1F1F1" stroke-width="1.5"/></svg>
<div class="a" style="left:32px;top:962px;width:1182px;height:25px;background:#2D2D30;"></div>
<div class="a" style="left:39px;top:964px;width:150px;height:20px;background:#333337;border:1px solid #3F3F46;"></div>
<div class="t" style="left:43.00px;top:968.84px;font-size:12px;color:#F1F1F1;transform:scaleX(0.9797);">Gesamte Projektmappe</div>
<svg class="a" style="left:178px;top:972px;" width="7" height="4" viewBox="0 0 7 4"><path d="M0 0 H7 L3.5 4 Z" fill="#999999"/></svg>
<div class="a" style="left:196px;top:966px;width:1px;height:16px;background:#46464A;"></div>
<div class="a" style="left:200px;top:963px;width:72px;height:22px;background:#2D2D30;border:1px solid #3399FF;"></div>
<svg class="a" style="left:204px;top:966px;" width="16" height="16" viewBox="0 0 16 16"><circle cx="8.0" cy="8.0" r="7.5" fill="#E51400" stroke="#FFFFFF" stroke-width="1"/><path d="M5.28 5.28 L10.72 10.72 M10.72 5.28 L5.28 10.72" stroke="#FFFFFF" stroke-width="2.24"/></svg>
<div class="t" style="left:222.50px;top:968.84px;font-size:12px;color:#F1F1F1;transform:scaleX(0.9768);">0 Fehler</div>
<div class="a" style="left:276px;top:966px;width:1px;height:16px;background:#46464A;"></div>
<div class="a" style="left:280px;top:963px;width:102px;height:22px;background:#2D2D30;border:1px solid #3399FF;"></div>
<svg class="a" style="left:283px;top:966px;" width="17" height="15" viewBox="0 0 17 15"><path d="M8.5 0.8 L16.3 14.3 H0.7 Z" fill="#FFCC00" stroke="#F4F4F4" stroke-width="1.0" stroke-linejoin="round"/><rect x="7.14" y="4.5" width="2.72" height="5.7" fill="#000"/><rect x="7.14" y="11.1" width="2.72" height="1.9500000000000002" fill="#000"/></svg>
<div class="t" style="left:302.50px;top:968.84px;font-size:12px;color:#F1F1F1;transform:scaleX(1.0021);">6 Warnungen</div>
<div class="a" style="left:386px;top:966px;width:1px;height:16px;background:#46464A;"></div>
<svg class="a" style="left:392px;top:965px;" width="17" height="17" viewBox="0 0 17 17"><circle cx="8.5" cy="8.5" r="8" fill="#1BA1E2" stroke="#FFFFFF" stroke-width="0.8"/><rect x="7.3" y="7" width="2.4" height="6.5" fill="#FFFFFF"/><circle cx="8.5" cy="4.6" r="1.3" fill="#FFFFFF"/></svg>
<div class="t" style="left:412.30px;top:968.84px;font-size:12px;color:#F1F1F1;transform:scaleX(1.0242);">0 von 6 Mitteilungen</div>
<div class="a" style="left:535px;top:966px;width:1px;height:16px;background:#46464A;"></div>
<div class="a" style="left:538px;top:963px;width:22px;height:22px;background:#2D2D30;border:1px solid #3399FF;"></div>
<svg class="a" style="left:541px;top:966px;" width="16" height="16" viewBox="0 0 16 16"><path d="M1 1 L6 6 M6 1 L1 6" stroke="#F48771" stroke-width="1.6"/><path d="M5 7 H15 L11 11 V15 H9 V11 Z" fill="#C8C8C8"/></svg>
<div class="a" style="left:565px;top:966px;width:1px;height:16px;background:#46464A;"></div>
<div class="a" style="left:572px;top:964px;width:149px;height:20px;background:#333337;border:1px solid #3F3F46;"></div>
<div class="t" style="left:575.00px;top:968.84px;font-size:12px;color:#F1F1F1;transform:scaleX(0.9559);">Erstellen + IntelliSense</div>
<svg class="a" style="left:710px;top:972px;" width="7" height="4" viewBox="0 0 7 4"><path d="M0 0 H7 L3.5 4 Z" fill="#999999"/></svg>
<div class="a" style="left:1014px;top:963px;width:200px;height:22px;background:#333337;border:1px solid #3F3F46;"></div>
<div class="t" style="left:1018.50px;top:967.84px;font-size:12px;color:#999999;transform:scaleX(0.9874);">Fehlerliste durchsuchen</div>
<svg class="a" style="left:1185px;top:966px;" width="14" height="14" viewBox="0 0 14 14"><circle cx="8.5" cy="5.5" r="3.6" fill="none" stroke="#F1F1F1" stroke-width="1.8"/><path d="M6 8 L1.5 12.5" stroke="#F1F1F1" stroke-width="2.2" stroke-linecap="round"/></svg>
<div class="a" style="left:1202px;top:964px;width:12px;height:20px;background:#3F3F46;"></div>
<svg class="a" style="left:1204px;top:972px;" width="7" height="4" viewBox="0 0 7 4"><path d="M0 0 H7 L3.5 4 Z" fill="#F1F1F1"/></svg>
<div class="a" style="left:32px;top:987px;width:1165px;height:106px;background:#252526;"></div>
<div class="a" style="left:32px;top:1007px;width:1165px;height:1px;background:#3F3F46;"></div>
<div class="a" style="left:59px;top:988px;width:1px;height:19px;background:#3F3F46;"></div>
<div class="a" style="left:85px;top:988px;width:1px;height:19px;background:#3F3F46;"></div>
<div class="a" style="left:135px;top:988px;width:1px;height:19px;background:#3F3F46;"></div>
<div class="a" style="left:733px;top:988px;width:1px;height:19px;background:#3F3F46;"></div>
<div class="a" style="left:883px;top:988px;width:1px;height:19px;background:#3F3F46;"></div>
<div class="a" style="left:1033px;top:988px;width:1px;height:19px;background:#3F3F46;"></div>
<div class="a" style="left:1068px;top:988px;width:1px;height:19px;background:#3F3F46;"></div>
<div class="a" style="left:1194px;top:988px;width:1px;height:19px;background:#3F3F46;"></div>
<svg class="a" style="left:74px;top:989px;" width="9" height="9" viewBox="0 0 9 9"><rect x="0" y="0" width="1" height="1" fill="#AAA"/><rect x="2" y="0" width="5" height="1" fill="#AAA"/><rect x="3" y="2" width="2" height="2" fill="#888"/><rect x="6" y="2" width="2" height="2" fill="#888"/><rect x="6" y="5" width="2" height="2" fill="#888"/><rect x="6" y="8" width="2" height="1" fill="#888"/><rect x="3" y="5" width="1" height="1" fill="#666"/></svg>
<div class="t" style="left:89.10px;top:991.84px;font-size:12px;color:#F1F1F1;transform:scaleX(0.9969);">Code</div>
<div class="t" style="left:138.50px;top:991.84px;font-size:12px;color:#F1F1F1;transform:scaleX(0.9880);">Beschreibung</div>
<div class="t" style="left:736.50px;top:991.84px;font-size:12px;color:#F1F1F1;transform:scaleX(0.9907);">Projekt</div>
<div class="t" style="left:886.50px;top:991.84px;font-size:12px;color:#F1F1F1;transform:scaleX(0.9817);">Datei</div>
<div class="t" style="left:1036.50px;top:991.84px;font-size:12px;color:#F1F1F1;transform:scaleX(0.9998);">Ze...</div>
<div class="t" style="left:1071.50px;top:991.84px;font-size:12px;color:#F1F1F1;transform:scaleX(0.9790);">Unterdrückungszus...</div>
<svg class="a" style="left:64px;top:1010.0px;" width="18" height="17" viewBox="0 0 18 17"><path d="M9.0 0.8 L17.3 16.3 H0.7 Z" fill="#FFCC00" stroke="#F4F4F4" stroke-width="1.0" stroke-linejoin="round"/><rect x="7.5600000000000005" y="5.1" width="2.88" height="6.46" fill="#000"/><rect x="7.5600000000000005" y="12.58" width="2.88" height="2.21" fill="#000"/></svg>
<div class="t" style="left:89.10px;top:1013.34px;font-size:12px;color:#1BA0F2;transform:scaleX(0.8763);">CS0169</div>
<div class="t" style="left:138.50px;top:1013.34px;font-size:12px;color:#F1F1F1;transform:scaleX(0.9822);">Das Feld &quot;Form1.Kapital&quot; wird nie verwendet.</div>
<div class="t" style="left:736.50px;top:1013.34px;font-size:12px;color:#F1F1F1;transform:scaleX(0.9708);">ZinsenRechner</div>
<div class="t" style="left:886.50px;top:1013.34px;font-size:12px;color:#F1F1F1;transform:scaleX(0.9599);">Form1.cs</div>
<div class="t" style="left:1036.50px;top:1013.34px;font-size:12px;color:#F1F1F1;transform:scaleX(0.9740);">20</div>
<div class="t" style="left:1071.50px;top:1013.34px;font-size:12px;color:#F1F1F1;transform:scaleX(1.0575);">Aktiv</div>
<svg class="a" style="left:64px;top:1030.0px;" width="18" height="17" viewBox="0 0 18 17"><path d="M9.0 0.8 L17.3 16.3 H0.7 Z" fill="#FFCC00" stroke="#F4F4F4" stroke-width="1.0" stroke-linejoin="round"/><rect x="7.5600000000000005" y="5.1" width="2.88" height="6.46" fill="#000"/><rect x="7.5600000000000005" y="12.58" width="2.88" height="2.21" fill="#000"/></svg>
<div class="t" style="left:89.10px;top:1033.34px;font-size:12px;color:#1BA0F2;transform:scaleX(0.8763);">CS0169</div>
<div class="t" style="left:138.50px;top:1033.34px;font-size:12px;color:#F1F1F1;transform:scaleX(0.9808);">Das Feld &quot;Form1.Zinsen&quot; wird nie verwendet.</div>
<div class="t" style="left:736.50px;top:1033.34px;font-size:12px;color:#F1F1F1;transform:scaleX(0.9708);">ZinsenRechner</div>
<div class="t" style="left:886.50px;top:1033.34px;font-size:12px;color:#F1F1F1;transform:scaleX(0.9599);">Form1.cs</div>
<div class="t" style="left:1036.50px;top:1033.34px;font-size:12px;color:#F1F1F1;transform:scaleX(0.9740);">21</div>
<div class="t" style="left:1071.50px;top:1033.34px;font-size:12px;color:#F1F1F1;transform:scaleX(1.0575);">Aktiv</div>
<svg class="a" style="left:64px;top:1050.0px;" width="18" height="17" viewBox="0 0 18 17"><path d="M9.0 0.8 L17.3 16.3 H0.7 Z" fill="#FFCC00" stroke="#F4F4F4" stroke-width="1.0" stroke-linejoin="round"/><rect x="7.5600000000000005" y="5.1" width="2.88" height="6.46" fill="#000"/><rect x="7.5600000000000005" y="12.58" width="2.88" height="2.21" fill="#000"/></svg>
<div class="t" style="left:89.10px;top:1053.34px;font-size:12px;color:#1BA0F2;transform:scaleX(0.8763);">CS0169</div>
<div class="t" style="left:138.50px;top:1053.34px;font-size:12px;color:#F1F1F1;transform:scaleX(0.9748);">Das Feld &quot;Form1.Zinssatz&quot; wird nie verwendet.</div>
<div class="t" style="left:736.50px;top:1053.34px;font-size:12px;color:#F1F1F1;transform:scaleX(0.9708);">ZinsenRechner</div>
<div class="t" style="left:886.50px;top:1053.34px;font-size:12px;color:#F1F1F1;transform:scaleX(0.9599);">Form1.cs</div>
<div class="t" style="left:1036.50px;top:1053.34px;font-size:12px;color:#F1F1F1;transform:scaleX(0.9740);">22</div>
<div class="t" style="left:1071.50px;top:1053.34px;font-size:12px;color:#F1F1F1;transform:scaleX(1.0575);">Aktiv</div>
<svg class="a" style="left:64px;top:1070.0px;" width="18" height="17" viewBox="0 0 18 17"><path d="M9.0 0.8 L17.3 16.3 H0.7 Z" fill="#FFCC00" stroke="#F4F4F4" stroke-width="1.0" stroke-linejoin="round"/><rect x="7.5600000000000005" y="5.1" width="2.88" height="6.46" fill="#000"/><rect x="7.5600000000000005" y="12.58" width="2.88" height="2.21" fill="#000"/></svg>
<div class="t" style="left:89.10px;top:1073.34px;font-size:12px;color:#1BA0F2;transform:scaleX(0.8763);">CS0169</div>
<div class="t" style="left:138.50px;top:1073.34px;font-size:12px;color:#F1F1F1;transform:scaleX(0.9784);">Das Feld &quot;Form1.K&quot; wird nie verwendet.</div>
<div class="t" style="left:736.50px;top:1073.34px;font-size:12px;color:#F1F1F1;transform:scaleX(0.9708);">ZinsenRechner</div>
<div class="t" style="left:886.50px;top:1073.34px;font-size:12px;color:#F1F1F1;transform:scaleX(0.9599);">Form1.cs</div>
<div class="t" style="left:1036.50px;top:1073.34px;font-size:12px;color:#F1F1F1;transform:scaleX(0.9740);">25</div>
<div class="t" style="left:1071.50px;top:1073.34px;font-size:12px;color:#F1F1F1;transform:scaleX(1.0575);">Aktiv</div>
<svg class="a" style="left:64px;top:1090px;" width="18" height="17" viewBox="0 0 18 17"><path d="M9.0 0.8 L17.3 16.3 H0.7 Z" fill="#FFCC00" stroke="#F4F4F4" stroke-width="1.0" stroke-linejoin="round"/><rect x="7.5600000000000005" y="5.1" width="2.88" height="6.46" fill="#000"/><rect x="7.5600000000000005" y="12.58" width="2.88" height="2.21" fill="#000"/></svg>
<div class="a" style="left:1197px;top:988px;width:17px;height:105px;background:#3E3E42;"></div>
<svg class="a" style="left:1201px;top:994px;" width="9" height="5" viewBox="0 0 9 5"><path d="M0 5 L4.5 0 L9 5 Z" fill="#999999"/></svg>
<div class="a" style="left:1201px;top:1005px;width:9px;height:50px;background:#686868;"></div>
<svg class="a" style="left:1201px;top:1082px;" width="9" height="5" viewBox="0 0 9 5"><path d="M0 0 L4.5 5 L9 0 Z" fill="#999999"/></svg>
<div class="a" style="left:32px;top:1093px;width:1165px;height:17px;background:#3E3E42;"></div>
<svg class="a" style="left:37px;top:1097px;" width="5" height="9" viewBox="0 0 5 9"><path d="M5 0 V9 L0 4.5 Z" fill="#999999"/></svg>
<div class="a" style="left:49px;top:1097px;width:1127px;height:9px;background:#686868;"></div>
<svg class="a" style="left:1187px;top:1097px;" width="5" height="9" viewBox="0 0 5 9"><path d="M0 0 V9 L5 4.5 Z" fill="#999999"/></svg>
<div class="a" style="left:1197px;top:1093px;width:17px;height:17px;background:#1E1E1E;"></div>
<div class="a" style="left:32px;top:1110px;width:1182px;height:21px;background:#2D2D30;"></div>
<div class="a" style="left:31px;top:1110px;width:65px;height:21px;background:#252526;border:1px solid #3F3F46;border-top:none;"></div>
<div class="t" style="left:36.50px;top:1114.34px;font-size:12px;color:#1BA0F2;transform:scaleX(0.9755);">Fehlerliste</div>
<div class="t" style="left:101.50px;top:1114.34px;font-size:12px;color:#F1F1F1;transform:scaleX(1.0032);">Ausnahmeeinstellungen</div>
<div class="t" style="left:241.50px;top:1114.34px;font-size:12px;color:#F1F1F1;transform:scaleX(0.9921);">Ausgabe</div>
<div class="a" style="left:0px;top:1137px;width:1600px;height:23px;background:#007ACC;"></div>
<svg class="a" style="left:4px;top:1141px;" width="16" height="14" viewBox="0 0 16 14"><path d="M4 1.5 H15 L12 12.5 H1 Z" fill="none" stroke="#FFFFFF" stroke-width="1.3"/></svg>
<div class="t" style="left:28.00px;top:1142.84px;font-size:12px;color:#FFFFFF;transform:scaleX(0.9634);">Bereit</div>
<div class="t" style="left:800.00px;top:1142.84px;font-size:12px;color:#FFFFFF;transform:scaleX(0.9487);">Zeile 54</div>
<div class="t" style="left:891.50px;top:1142.84px;font-size:12px;color:#FFFFFF;transform:scaleX(0.9538);">Spalte 9</div>
<div class="t" style="left:983.50px;top:1142.84px;font-size:12px;color:#FFFFFF;transform:scaleX(0.9867);">Zeichen 9</div>
<div class="t" style="left:1119.50px;top:1142.84px;font-size:12px;color:#FFFFFF;transform:scaleX(0.9000);">EINFG</div>
<svg class="a" style="left:1311px;top:1142px;" width="11" height="13" viewBox="0 0 11 13"><path d="M5.5 13 V2 M1 6 L5.5 1.5 L10 6" fill="none" stroke="#FFFFFF" stroke-width="1.6"/></svg>
<div class="t" style="left:1329.50px;top:1142.84px;font-size:12px;color:#FFFFFF;transform:scaleX(1.0079);">Zur Quellcodeverwaltung hinzufügen</div>
<svg class="a" style="left:1534px;top:1145px;" width="8" height="5" viewBox="0 0 8 5"><path d="M0 5 L4 0 L8 5 Z" fill="#FFFFFF"/></svg>
<svg class="a" style="left:1560px;top:1139px;" width="24" height="21" viewBox="0 0 24 21"><path d="M3 14 Q5 12.5 5 9 Q5 2.5 10.5 2.5 Q16 2.5 16 9 Q16 12.5 18 14 Z M8.5 15 Q10.5 17.5 12.5 15" fill="#D9D9D9"/><circle cx="16.5" cy="14" r="5.6" fill="#E51400"/><text x="13.5" y="18" font-family="Liberation Sans" font-size="10.5" font-weight="bold" fill="#FFF">5</text></svg>
<div class="a" style="left:0px;top:1160px;width:1600px;height:40px;background:#D3E2EC;"></div>
<svg class="a" style="left:16px;top:1172px;" width="16" height="16" viewBox="0 0 16 16"><path d="M0 2.3 L6.5 1.4 V7.5 H0 Z M7.5 1.2 L16 0 V7.5 H7.5 Z M0 8.5 H6.5 V14.6 L0 13.7 Z M7.5 8.5 H16 V16 L7.5 14.8 Z" fill="#000000"/></svg>
<div class="a" style="left:48px;top:1160px;width:343px;height:40px;background:#FFFFFF;border-left:1px solid #B9C4CE;"></div>
<svg class="a" style="left:60px;top:1171px;" width="17" height="17" viewBox="0 0 17 17"><circle cx="10.5" cy="6.5" r="5.5" fill="none" stroke="#000" stroke-width="1.2"/><path d="M6.5 10.5 L0.7 16.3" stroke="#000" stroke-width="1.3"/></svg>
<div class="t" style="left:87.50px;top:1173.73px;font-size:14.5px;color:#333333;transform:scaleX(1.0189);">Zur Suche Text hier eingeben</div>
<svg class="a" style="left:407px;top:1171px;" width="18" height="18" viewBox="0 0 18 18"><circle cx="9" cy="9" r="7.3" fill="none" stroke="#000" stroke-width="2.2"/></svg>
<svg class="a" style="left:454px;top:1171px;" width="19" height="18" viewBox="0 0 19 18"><path d="M1 3 H12 M1 15 H12 M2.5 5 H10.5 V13 H2.5 Z M15 2 V6 M15 8 V10 M15 12 V16 M17 3 V15" fill="none" stroke="#000" stroke-width="1.4"/></svg>
<div class="a" style="left:495px;top:1197px;width:40px;height:3px;background:#0078D7;"></div>
<svg class="a" style="left:504px;top:1169px;" width="22" height="22" viewBox="0 0 22 22"><path d="M21 12.5 H6 Q6.5 17.5 12 17.5 Q16 17.5 20 15.5 V20 Q16 22 11.5 22 Q2 21.5 1.5 12 Q1.5 6 6 2.5 Q3.5 6 4.5 9 Q6 4.5 11.5 4.5 Q17 4.5 19.5 7.5 Q21.5 10 21 12.5 Z M7 10 H15.5 Q15 6.5 11.5 6.5 Q7.5 6.5 7 10 Z" fill="#0078D7" fill-rule="evenodd"/></svg>
<svg class="a" style="left:552px;top:1168px;" width="24" height="24" viewBox="0 0 24 24"><circle cx="12" cy="12" r="11" fill="#DB4437"/><path d="M12 12 L22.5 9 A11 11 0 0 1 7 21.5 Z" fill="#0F9D58"/><path d="M12 12 L7 21.5 A11 11 0 0 1 2 6 Z" fill="#0F9D58"/><path d="M12 12 L22.5 9 A11 11 0 0 0 15 1.4 Z" fill="#F4B400"/><path d="M12 12 L2 6 A11 11 0 0 1 7 2.2 Z" fill="#DB4437"/><circle cx="12" cy="12" r="5.2" fill="#FFFFFF"/><circle cx="12" cy="12" r="4.1" fill="#4285F4"/></svg>
<svg class="a" style="left:601px;top:1168px;" width="23" height="22" viewBox="0 0 23 22"><path d="M0 2 H8 L10 4 H23 V21 H0 Z" fill="#F8C83C"/><path d="M0 6 H23 V21 H0 Z" fill="#FFD75E"/><rect x="7" y="13" width="9" height="8" fill="#2F7BD6"/><rect x="9.5" y="16" width="4" height="5" fill="#FFD75E"/></svg>
<svg class="a" style="left:649px;top:1165px;" width="25" height="27" viewBox="0 0 25 27"><path d="M8 7 Q8 1.5 12.5 1.5 Q17 1.5 17 7" fill="none" stroke="#000" stroke-width="1.6"/><rect x="1" y="6" width="23" height="20" fill="#000"/><rect x="6" y="11" width="6" height="6" fill="#F25022"/><rect x="13" y="11" width="6" height="6" fill="#7FBA00"/><rect x="6" y="18" width="6" height="6" fill="#00A4EF"/><rect x="13" y="18" width="6" height="6" fill="#FFB900"/></svg>
<svg class="a" style="left:698px;top:1167px;" width="38" height="32" viewBox="0 0 38 32"><path d="M1 8 L13 2 L25 8 V21 H1 Z" fill="#3F4448"/><path d="M1.5 8.5 L13 15 L24.5 8.5" fill="none" stroke="#FFFFFF" stroke-width="1.6"/><path d="M1 8 H25" stroke="#FFFFFF" stroke-width="1.2"/><circle cx="25.5" cy="20.5" r="10" fill="#D4D4D4" stroke="#555555" stroke-width="0.8"/><text x="18.3" y="25.3" font-family="Liberation Sans" font-size="13" fill="#000">32</text></svg>
<svg class="a" style="left:749px;top:1172px;" width="22" height="16" viewBox="0 0 22 16"><rect x="0" y="0" width="22" height="16" rx="4" fill="#FF0000"/><path d="M8.5 4.5 L14.5 8 L8.5 11.5 Z" fill="#FFFFFF"/></svg>
<svg class="a" style="left:796px;top:1171px;" width="26" height="18" viewBox="0 0 26 18"><path d="M7.5 2 Q12.5 2 12.5 7.5 Q12.5 13 7.5 13 Q2 13 2 7.5 Q2 2 7.5 2 Z M12 9 L6 17" fill="none" stroke="#2B9EB3" stroke-width="2.6"/><path d="M18.5 2 Q24 2 24 7.5 Q24 13 18.5 13 Q13.5 13 13.5 7.5 M18 13 L21 17" fill="none" stroke="#2B9EB3" stroke-width="2.6"/></svg>
<svg class="a" style="left:846px;top:1168px;" width="24" height="24" viewBox="0 0 24 24"><path d="M12 1 Q23 1 23 11 Q23 20 13 21 L9 24 V20.5 Q1 19 1 11 Q1 1 12 1 Z" fill="#10B13E"/></svg>
<svg class="a" style="left:894px;top:1168px;" width="25" height="24" viewBox="0 0 25 24"><rect x="0" y="0" width="25" height="24" fill="#1B7FD6"/><rect x="4" y="6" width="17" height="12" fill="none" stroke="#FFFFFF" stroke-width="1.6"/><path d="M4 9 H21" stroke="#FFFFFF" stroke-width="1.4"/></svg>
<div class="a" style="left:932px;top:1160px;width:48px;height:40px;background:#EBF0F5;"></div>
<div class="a" style="left:932px;top:1197px;width:48px;height:3px;background:#0078D7;"></div>
<svg class="a" style="left:944px;top:1169px;" width="24" height="24" viewBox="0 0 24 24"><path d="M17 0.5 L23.5 3.5 V20.5 L17 23.5 L7.5 14.5 L3 18 L0.5 16.8 V7.2 L3 6 L7.5 9.5 Z M17 7 L11.2 12 L17 17 Z M3 9.5 V14.5 L5.6 12 Z" fill="#865FC5" fill-rule="evenodd"/><path d="M17 0.5 L23.5 3.5 V20.5 L17 23.5 Z" fill="#B28BE0"/><path d="M17 7 V17 L11.2 12 Z" fill="#EBF0F5"/></svg>
<svg class="a" style="left:1414px;top:1175px;" width="14" height="9" viewBox="0 0 14 9"><path d="M1 8 L7 1.5 L13 8" fill="none" stroke="#000" stroke-width="1.4"/></svg>
<svg class="a" style="left:1435px;top:1173px;" width="19" height="16" viewBox="0 0 19 16"><rect x="5" y="2" width="13" height="9" fill="none" stroke="#000" stroke-width="1.3"/><path d="M11.5 11 V14 M7 15 H16" stroke="#000" stroke-width="1.3"/><rect x="0.5" y="0.5" width="6" height="5" fill="#D5E0EA" stroke="#000" stroke-width="1"/><path d="M3.5 5.5 V13 H5" fill="none" stroke="#000"/></svg>
<svg class="a" style="left:1460px;top:1174px;" width="17" height="14" viewBox="0 0 17 14"><path d="M1 4.5 H4 L8 1 V13 L4 9.5 H1 Z" fill="none" stroke="#000" stroke-width="1.2"/><path d="M11 4.5 L16 9.5 M16 4.5 L11 9.5" stroke="#000" stroke-width="1.3"/></svg>
<div class="t" style="left:1499.50px;top:1165.34px;font-size:12px;color:#000000;transform:scaleX(0.8991);">16:42</div>
<div class="t" style="left:1486.50px;top:1183.34px;font-size:12px;color:#000000;transform:scaleX(0.9211);">22.11.2019</div>
<svg class="a" style="left:1557px;top:1170px;" width="30" height="27" viewBox="0 0 30 27"><path d="M1.5 2 H18.5 V14 H7 L3.5 17 V14 H1.5 Z" fill="#000"/><path d="M4.5 5.5 H15.5 M4.5 8.5 H15.5 M4.5 11.5 H12" stroke="#D5E0EA" stroke-width="1.2"/><circle cx="17" cy="17.5" r="9" fill="#D0D0D0" stroke="#555" stroke-width="1"/><text x="10.5" y="22" font-family="Liberation Sans" font-size="12" fill="#000">20</text></svg>
<div class="a" style="left:1595px;top:1160px;width:1px;height:40px;background:#9AA6B2;"></div>
<div class="a" style="left:1221px;top:72px;width:312px;height:1059px;background:#252526;border:1px solid #3F3F46;"></div>
<div class="a" style="left:1222px;top:73px;width:310px;height:20px;background:#2D2D30;"></div>
<div class="t" style="left:1225.50px;top:77.84px;font-size:12px;color:#F1F1F1;transform:scaleX(0.9730);">Eigenschaften</div>
<svg class="a" style="left:1308px;top:81px" width="170" height="5"><defs><pattern id="gp2" width="4" height="4" patternUnits="userSpaceOnUse"><rect x="0" y="0" width="1" height="1" fill="#505055"/><rect x="2" y="2" width="1" height="1" fill="#505055"/></pattern></defs><rect width="170" height="5" fill="url(#gp2)"/></svg>
<svg class="a" style="left:1484px;top:80px;" width="9" height="5" viewBox="0 0 9 5"><path d="M0 0 H9 L4.5 5 Z" fill="#F1F1F1"/></svg>
<svg class="a" style="left:1500px;top:77px;" width="9" height="14" viewBox="0 0 9 14"><rect x="1.5" y="1.5" width="5" height="6" fill="none" stroke="#F1F1F1" stroke-width="1.3"/><path d="M0 7.5 H8 M4 7.5 V13" stroke="#F1F1F1" stroke-width="1.2"/></svg>
<svg class="a" style="left:1515px;top:78px;" width="11" height="11" viewBox="0 0 11 11"><path d="M0.5 0.5 L10.5 10.5 M10.5 0.5 L0.5 10.5" stroke="#F1F1F1" stroke-width="1.3"/></svg>
<div class="a" style="left:1222px;top:93px;width:310px;height:25px;background:#333337;"></div>
<svg class="a" style="left:1521px;top:104px;" width="8" height="5" viewBox="0 0 8 5"><path d="M0 0 H8 L4 5 Z" fill="#F1F1F1"/></svg>
<div class="a" style="left:1222px;top:118px;width:310px;height:27px;background:#2D2D30;"></div>
<svg class="a" style="left:1228px;top:123px;" width="17" height="17" viewBox="0 0 17 17"><rect x="1" y="1" width="5" height="5" fill="#D0D0D0"/><rect x="1" y="10" width="5" height="5" fill="#D0D0D0"/><path d="M2 3.5 H5 M3.5 2 V5 M2 12.5 H5 M3.5 11 V14" stroke="#2D2D30" stroke-width="1"/><path d="M7 1.5 H12 M7 3.5 H12 M7 5.5 H12 M7 7.5 H12 M7 9.5 H12 M7 12.5 H12 M7 14.5 H12 M13 3.5 H15 M13 5.5 H15 M13 7.5 H15 M13 9.5 H15 M13 14.5 H15" stroke="#D0D0D0" stroke-width="1"/></svg>
<div class="a" style="left:1248px;top:120px;width:23px;height:22px;border:1px solid #3399FF;"></div>
<svg class="a" style="left:1251px;top:122px;" width="18" height="18" viewBox="0 0 18 18"><rect x="1" y="2" width="7" height="7" fill="#D0D0D0"/><path d="M2.3 8 L4.5 3 L6.7 8 M3.2 6.3 H5.8" fill="none" stroke="#2D2D30" stroke-width="1"/><path d="M2 11.5 H7 L2 16 H7" fill="none" stroke="#D0D0D0" stroke-width="1.5"/><path d="M12 5 V13 M9.3 10.5 L12 14 L14.7 10.5" fill="none" stroke="#55C8FF" stroke-width="2"/></svg>
<div class="a" style="left:1274px;top:122px;width:1px;height:19px;background:#3F3F46;"></div>
<svg class="a" style="left:1280px;top:123px;" width="17" height="17" viewBox="0 0 17 17"><path d="M9 1 L13 0.5 L16 3.5 L15.8 8 L12.5 10.5 L9.5 10.2 L3 16.5 L0.5 14 L6.8 7.5 L6.5 4 Z" fill="#9A9A9A" stroke="#B8B8B8" stroke-width="0.5" stroke-dasharray="1 1"/><path d="M11.5 3.5 L13.5 5.5" stroke="#6E6E6E" stroke-width="2"/></svg>
<div class="a" style="left:1222px;top:1066px;width:310px;height:1px;background:#333337;"></div>
<div class="a" style="left:1539px;top:72px;width:30px;height:1059px;background:#252526;border:1px solid #3F3F46;"></div>
<div class="a" style="left:1540px;top:73px;width:28px;height:47px;background:#2D2D30;"></div>
<div class="t" style="left:1544.00px;top:77.84px;font-size:12px;color:#F1F1F1;transform:scaleX(0.9372);">Pr...</div>
<svg class="a" style="left:1559px;top:99px;" width="7" height="5" viewBox="0 0 7 5"><path d="M0 0 L2 2.5 L0 5 Z M4 0 L6 2.5 L4 5 Z" fill="#999"/></svg>
<div class="a" style="left:1540px;top:120px;width:28px;height:21px;background:#2D2D30;border:1px solid #3F3F46;"></div>
<div class="a" style="left:1540px;top:120px;width:28px;height:21px;overflow:hidden">
<div class="t" style="left:5.50px;top:5.84px;font-size:12px;color:#999999;transform:scaleX(0.96);">Projektmappen</div>
</div>
<div class="a" style="left:1540px;top:142px;width:28px;height:19px;background:#1E1E1E;"></div>
<svg class="a" style="left:1552px;top:145px;" width="16" height="16" viewBox="0 0 16 16"><path d="M2.5 6 V1.5 H14.5 V12.5 H9" fill="none" stroke="#C8C8C8" stroke-width="1.2"/><path d="M2 2 H15" stroke="#C8C8C8" stroke-width="2"/><path d="M7.5 7.5 L9.5 8.5 V14 L7.5 15 L4.5 12.2 L2.6 13.6 L1.5 13.1 V9.4 L2.6 8.9 L4.5 10.3 Z M7.5 10 L6 11.2 L7.5 12.5 Z" fill="#9D6DE0" fill-rule="evenodd"/></svg>
<div class="a" style="left:1540px;top:161px;width:28px;height:19px;background:#3E3E42;"></div>
<svg class="a" style="left:1550px;top:167px;" width="8" height="8" viewBox="0 0 8 8"><path d="M8 0 V8 H0 Z" fill="#F1F1F1"/></svg>
<div class="a" style="left:1540px;top:1093px;width:28px;height:17px;background:#3E3E42;"></div>
<svg class="a" style="left:1545px;top:1097px;" width="5" height="9" viewBox="0 0 5 9"><path d="M5 0 V9 L0 4.5 Z" fill="#999999"/></svg>
<svg class="a" style="left:1559px;top:1097px;" width="5" height="9" viewBox="0 0 5 9"><path d="M0 0 V9 L5 4.5 Z" fill="#999999"/></svg>
<div class="a" style="left:1540px;top:1110px;width:14px;height:21px;background:#252526;border:1px solid #3F3F46;"></div>
<div class="a" style="left:1545px;top:1113px;width:3px;height:3px;background:#DCDCDC;"></div>
<div class="a" style="left:1545px;top:1118px;width:3px;height:6px;background:#9D6DE0;"></div>
<div class="a" style="left:1559px;top:1113px;width:2px;height:4px;background:#DCDCDC;"></div>
<div class="a" style="left:1559px;top:1118px;width:3px;height:6px;border:1px solid #DCDCDC;"></div>
<div class="t" style="left:1589.00px;top:73.00px;font-size:12px;color:#F1F1F1;transform:rotate(90deg) scaleX(0.9796);">Diagnosetools</div>
<div class="a" style="left:1594px;top:72px;width:6px;height:75px;background:#3E3E42;"></div>
</body></html>
